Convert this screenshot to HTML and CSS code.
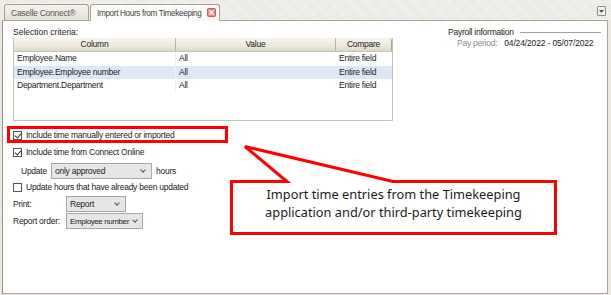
FILE: index.html
```html
<!DOCTYPE html>
<html>
<head>
<meta charset="utf-8">
<link rel="stylesheet" href="styles.css">
</head>
<body>
<div class="window">
  <div class="tabbar">
    <div class="tab">Caselle Connect®</div>
    <div class="tab active"><span class="ttext">Import Hours from Timekeeping</span>
      <span class="close"><svg width="9" height="9" viewBox="0 0 9 9"><rect x="0.5" y="0.5" width="8" height="8" rx="1" fill="#e78a8a" stroke="#c85a5a"/><path d="M2.5 2.5 L6.5 6.5 M6.5 2.5 L2.5 6.5" stroke="#fff" stroke-width="1.3"/></svg></span>
    </div>
    <div class="spacer"></div>
    <div class="dropbtn"><svg width="5" height="3" viewBox="0 0 5 3"><path d="M0 0 H5 L2.5 3 Z" fill="#555"/></svg></div>
  </div>
  <div class="panel">
    <div class="left">
      <div class="label">Selection criteria:</div>
      <div class="grid">
        <div class="ghead">
          <div class="c1">Column</div>
          <div class="c2">Value</div>
          <div class="c3">Compare</div>
        </div>
        <div class="grow"><div class="c1">Employee.Name</div><div class="c2">All</div><div class="c3">Entire field</div></div>
        <div class="grow sel"><div class="c1">Employee.Employee number</div><div class="c2">All</div><div class="c3">Entire field</div></div>
        <div class="grow"><div class="c1">Department.Department</div><div class="c2">All</div><div class="c3">Entire field</div></div>
      </div>
      <div class="check first"><span class="box on"></span>Include time manually entered or imported</div>
      <div class="check"><span class="box on"></span>Include time from Connect Online</div>
      <div class="update">
        <span class="ulabel">Update</span>
        <div class="select w100">only approved<span class="chev"></span></div>
        <span>hours</span>
      </div>
      <div class="check tight"><span class="box"></span>Update hours that have already been updated</div>
      <div class="frow first">
        <span class="flabel">Print:</span>
        <div class="select w59">Report<span class="chev"></span></div>
      </div>
      <div class="frow">
        <span class="flabel">Report order:</span>
        <div class="select w76"><span class="stext">Employee number</span><span class="chev"></span></div>
      </div>
    </div>
    <div class="right">
      <div class="ptitle"><span>Payroll information</span><span class="rule"></span></div>
      <div class="period"><span class="plabel">Pay period:</span><span class="pval">04/24/2022 - 05/07/2022</span></div>
    </div>
  </div>

  <div class="hilite"></div>
  <svg class="callout-shape" width="611" height="295" viewBox="0 0 611 295">
    <path d="M231.5 181.5 H287 L245 146.5 L393 181.5 H555.5 V233.5 H231.5 Z" fill="#fff" stroke="#f00" stroke-width="3" stroke-linejoin="miter"/>
  </svg>
  <div class="callout-text">Import time entries from the Timekeeping<br>application and/or third-party timekeeping</div>
</div>
</body>
</html>
```
FILE: styles.css
```css
* { box-sizing: border-box; }
html, body { margin: 0; padding: 0; }
body { width: 611px; height: 295px; overflow: hidden; background: #fff; }
.window {
  position: relative;
  width: 611px; height: 295px;
  background: #e9e7e0;
  font-family: "Liberation Sans", Arial, sans-serif;
  font-size: 8.5px;
  letter-spacing: -0.25px;
  color: #222;
  display: flex; flex-direction: column;
}
.tabbar {
  height: 20px;
  display: flex; align-items: flex-end;
  padding-left: 4px;
  background: repeating-linear-gradient(45deg, #f1f0ec 0 1px, #e9e8e2 1px 2px);
}
.tab {
  height: 16px;
  width: 85px;
  margin-right: 1px;
  border: 1px solid #a6a296;
  border-bottom: none;
  border-radius: 3px 3px 0 0;
  background: linear-gradient(#f4f3ee, #e3e0d4);
  color: #555;
  padding: 3px 0 0 6px;
  white-space: nowrap;
}
.tab.active {
  width: 130px;
  height: 17px;
  background: #fafaf8;
  color: #444;
  position: relative;
  padding-left: 6px;
  margin-bottom: -1px;
  border-color: #a59f95;
}
.ttext { font-size: 8.2px; letter-spacing: -0.35px; }
.close { position: absolute; right: 3px; top: 3px; line-height: 0; }
.spacer { flex: 1; }
.dropbtn {
  width: 9px; height: 10px;
  margin: 0 5px 4px 0;
  border: 1px solid #8f8c84;
  border-radius: 1px;
  background: #f3f2ee;
  display: flex; align-items: center; justify-content: center;
}
.panel {
  height: 274px;
  margin: 0 3px 0 2px;
  background: #fff;
  border: 1px solid #a9a59c;
  border-left: 1px solid #a08e80;
  display: flex;
}
.left { width: 400px; flex: none; padding: 6px 0 0 10px; }
.label { height: 10px; line-height: 10px; color: #222; letter-spacing: 0; }
.grid {
  margin-top: 1px;
  width: 380px; height: 83px;
  border: 1px solid #c3c1b6;
  border-top: none;
}
.ghead {
  display: flex; height: 14px;
  background: linear-gradient(#f6f5ee, #ebe8dc 60%, #dcd8c8);
  border-bottom: 1px solid #c7c3b2;
}
.ghead > div { text-align: center; line-height: 13px; border-right: 1px solid #b9b4a4; }
.ghead .c3 { border-right: 1px solid #a9a493; border-radius: 0 3px 0 0; }
.c1 { width: 162px; }
.c2 { width: 160px; }
.c3 { width: 56px; }
.grow { display: flex; height: 13.5px; line-height: 13.5px; }
.grow > div { padding-left: 3px; white-space: nowrap; }
.grow .c1 { border-right: 1px solid #f0f0f0; }
.grow.sel { background: #dde7f5; }
.check { display: flex; align-items: center; height: 12px; margin-top: 5px; white-space: nowrap; }
.check.first { margin-top: 8px; }
.check.tight { margin-top: 2px; }
.box {
  width: 9px; height: 9px;
  border: 1px solid #555;
  margin-right: 4px;
  background: #fff;
  position: relative;
  flex: none;
}
.box.on::after {
  content: "";
  position: absolute; left: 2px; top: 0px;
  width: 3px; height: 5px;
  border: solid #333; border-width: 0 1px 1px 0;
  transform: rotate(40deg);
}
.update { display: flex; align-items: center; margin-top: 5px; height: 16px; padding-left: 8px; }
.ulabel { width: 30px; }
.select {
  height: 16px;
  border: 1px solid #a6a6a6;
  background: #e6e6e6;
  padding-left: 3px;
  line-height: 14px;
  position: relative;
  margin-right: 4px;
  white-space: nowrap;
}
.chev {
  position: absolute; right: 6px; top: 4px;
  width: 4px; height: 4px;
  border: solid #555; border-width: 0 1px 1px 0;
  transform: rotate(45deg);
}
.w100 { width: 101px; }
.w59 { width: 60px; }
.w76 { width: 77px; }
.w76 .chev { right: 5px; }
.stext { font-size: 8px; letter-spacing: -0.4px; }
.frow { display: flex; align-items: center; height: 16px; margin-top: 1px; }
.frow.first { margin-top: 3px; }
.flabel { width: 53px; white-space: nowrap; }
.right { flex: 1; padding: 6px 0 0 45px; white-space: nowrap; }
.ptitle { display: flex; align-items: center; height: 10px; }
.rule { flex: 1; height: 1px; background: #a0a0a0; margin: 0 6px 0 6px; }
.period { margin-top: 1px; padding-left: 9px; }
.plabel { color: #888; margin-right: 7px; }
.pval { color: #222; letter-spacing: -0.15px; }
.hilite {
  position: absolute; left: 7px; top: 126px;
  width: 221px; height: 17px;
  border: 3px solid #f00;
}
.callout-shape { position: absolute; left: 0; top: 0; }
.callout-text {
  position: absolute; left: 231px; top: 186px;
  width: 325px;
  text-align: center;
  font-family: "Noto Sans", "Open Sans", sans-serif;
  font-size: 12.8px;
  letter-spacing: 0;
  line-height: 17.5px;
  color: #1a1a1a;
}
```
